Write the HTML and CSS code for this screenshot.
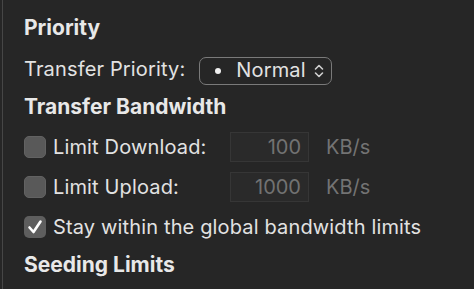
FILE: index.html
```html
<!DOCTYPE html>
<html>
<head>
<meta charset="utf-8">
<link rel="stylesheet" href="styles.css">
</head>
<body>
<div class="panel">
  <h2 class="heading first">Priority</h2>
  <div class="row">
    <span class="label">Transfer Priority:</span>
    <div class="popup">
      <span class="dot"></span>
      <span class="popup-text">Normal</span>
      <svg class="chev" width="10" height="16" viewBox="0 0 10 16"><path d="M1.5 6 L5 2.5 L8.5 6 M1.5 10 L5 13.5 L8.5 10" fill="none" stroke="#d0d0d0" stroke-width="1.6" stroke-linecap="round" stroke-linejoin="round"/></svg>
    </div>
  </div>
  <h2 class="heading">Transfer Bandwidth</h2>
  <div class="row">
    <span class="check"></span>
    <span class="label fixed">Limit Download:</span>
    <div class="field">100</div>
    <span class="unit">KB/s</span>
  </div>
  <div class="row">
    <span class="check"></span>
    <span class="label fixed">Limit Upload:</span>
    <div class="field">1000</div>
    <span class="unit">KB/s</span>
  </div>
  <div class="row">
    <span class="check checked"><svg width="22" height="22" viewBox="0 0 22 22"><path d="M5.5 11.5 L9.5 16 L16.5 5.5" fill="none" stroke="#ffffff" stroke-width="2.6" stroke-linecap="round" stroke-linejoin="round"/></svg></span>
    <span class="label">Stay within the global bandwidth limits</span>
  </div>
  <h2 class="heading">Seeding Limits</h2>
</div>
</body>
</html>
```
FILE: styles.css
```css
html, body {
  margin: 0;
  padding: 0;
  background: #262626;
  width: 474px;
  height: 289px;
  overflow: hidden;
}
body {
  font-family: Inter, "Liberation Sans", sans-serif;
  color: #e2e2e2;
}
.panel {
  margin-left: 2px;
  border-left: 1px solid #464646;
  height: 289px;
  box-sizing: border-box;
  padding: 16px 0 0 21px;
  display: flex;
  flex-direction: column;
}
.heading {
  margin: 6px 0 8px 0;
  font-size: 21px;
  line-height: 24px;
  font-weight: 700;
  color: #e8e8e8;
}
.heading.first {
  margin-top: 0;
  margin-bottom: 9px;
}
.row {
  height: 40px;
  display: flex;
  align-items: center;
}
.label {
  font-size: 20px;
  line-height: 24px;
  letter-spacing: 0.15px;
}
.label.fixed {
  width: 177px;
}
.popup {
  margin-left: 14px;
  margin-top: 4px;
  width: 133px;
  height: 28px;
  box-sizing: border-box;
  border: 1.5px solid #7a7a7a;
  border-radius: 7px;
  display: flex;
  align-items: center;
  padding-left: 15px;
}
.dot {
  width: 6px;
  height: 6px;
  border-radius: 50%;
  background: #f0f0f0;
}
.popup-text {
  margin-left: 15px;
  font-size: 20px;
  line-height: 24px;
  margin-top: -2px;
  letter-spacing: 0.15px;
}
.chev {
  margin-left: 8px;
}
.check {
  width: 22px;
  height: 22px;
  box-sizing: border-box;
  border-radius: 5px;
  background: #595959;
  border: 1px solid #626262;
  margin-right: 7px;
  display: flex;
  align-items: center;
  justify-content: center;
}
.check svg {
  display: block;
}
.check.checked {
  background: #5e5e5e;
  border: none;
}
.field {
  width: 79px;
  height: 30px;
  box-sizing: border-box;
  border: 1px solid #363636;
  background: #2a2a2a;
  color: #727272;
  font-size: 20px;
  line-height: 28px;
  text-align: right;
  padding-right: 7px;
}
.unit {
  margin-left: 17px;
  font-size: 20px;
  color: #737373;
}
```
